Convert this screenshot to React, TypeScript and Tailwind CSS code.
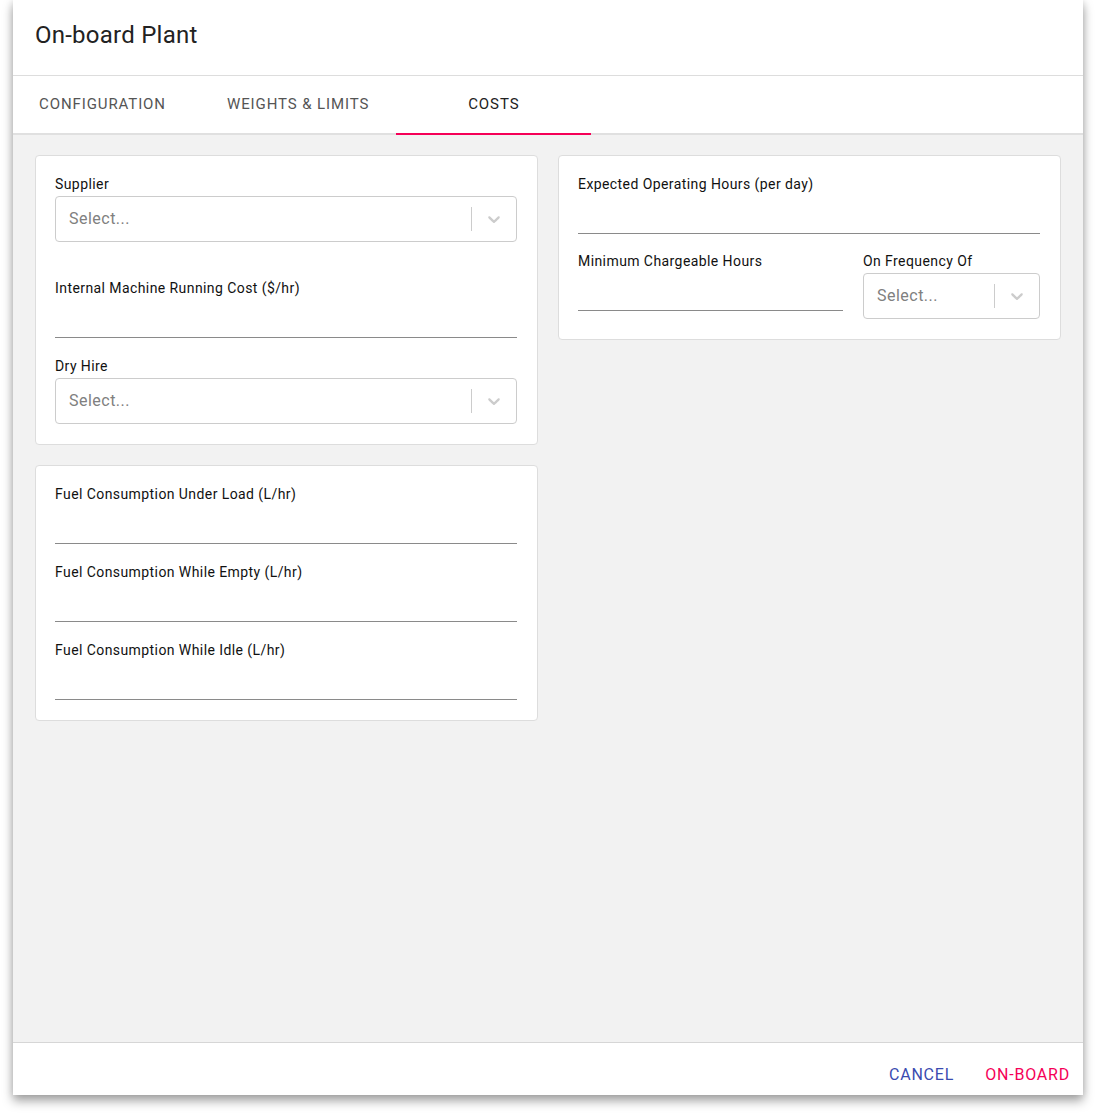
import React from 'react';

const Chevron: React.FC = () => (
  <svg viewBox="0 0 20 20" className="w-5 h-5 fill-[#cccccc]">
    <path d="M4.516 7.548c0.436-0.446 1.043-0.481 1.576 0l3.908 3.747 3.908-3.747c0.533-0.481 1.141-0.446 1.574 0 0.436 0.445 0.408 1.197 0 1.615-0.406 0.418-4.695 4.502-4.695 4.502-0.217 0.223-0.502 0.335-0.787 0.335s-0.57-0.112-0.789-0.335c0 0-4.287-4.084-4.695-4.502s-0.436-1.17 0-1.615z" />
  </svg>
);

const SelectBox: React.FC = () => (
  <div className="mt-[3px] h-[46px] flex items-center border border-[#cccccc] rounded-[4px] bg-white">
    <span className="flex-1 pl-[13px] text-[16px] tracking-[0.03em] text-[#808080]">Select...</span>
    <span className="w-px h-[24px] bg-[#cccccc]" />
    <span className="w-[44px] flex justify-center">
      <Chevron />
    </span>
  </div>
);

const Label: React.FC<{ text: string }> = ({ text }) => (
  <div className="text-[14px] leading-[17px] tracking-[0.03em] text-[#111]">{text}</div>
);

const TextField: React.FC<{ label: string }> = ({ label }) => (
  <div>
    <Label text={label} />
    <div className="h-[41px] border-b border-[#8a8a8a]" />
  </div>
);

const SelectField: React.FC<{ label: string }> = ({ label }) => (
  <div>
    <Label text={label} />
    <SelectBox />
  </div>
);

const Card: React.FC<{ children: React.ReactNode }> = ({ children }) => (
  <div className="bg-white border border-[#dddddd] rounded-[4px] pl-[19px] pr-5 pt-5 pb-5">{children}</div>
);

export default function App() {
  return (
    <div className="bg-white min-h-[1114px] pl-[13px] font-['Roboto',sans-serif]">
      <div className="w-[1070px] h-[1095px] flex flex-col bg-white shadow-[0_6px_10px_rgba(0,0,0,0.35),0_0_8px_rgba(0,0,0,0.12)]">
        {/* header */}
        <div className="h-[76px] border-b border-[#dddddd] flex items-center pl-[22px]">
          <h1 className="text-[24px] tracking-[0.01em] text-[#222] pb-[5px]">On-board Plant</h1>
        </div>

        {/* tabs */}
        <div className="h-[59px] flex items-stretch border-b-2 border-[#e0e0e0] text-[15px] tracking-[0.06em] uppercase">
          <div className="ml-[26px] flex items-center text-[#555]">Configuration</div>
          <div className="ml-[61px] flex items-center text-[#555]">Weights &amp; Limits</div>
          <div className="ml-[27px] w-[195px] flex items-center justify-center text-[#222] relative">
            Costs
            <span className="absolute left-0 right-0 bottom-[-2px] h-[2px] bg-[#f50057]" />
          </div>
        </div>

        {/* content */}
        <div className="flex-1 bg-[#f2f2f2] px-[22px] pt-5">
          <div className="grid grid-cols-2 gap-5 items-start">
            <div className="flex flex-col gap-5">
              <Card>
                <SelectField label="Supplier" />
                <div className="mt-[38px]">
                  <TextField label="Internal Machine Running Cost ($/hr)" />
                </div>
                <div className="mt-[20px]">
                  <SelectField label="Dry Hire" />
                </div>
              </Card>
              <Card>
                <div className="flex flex-col gap-5">
                  <TextField label="Fuel Consumption Under Load (L/hr)" />
                  <TextField label="Fuel Consumption While Empty (L/hr)" />
                  <TextField label="Fuel Consumption While Idle (L/hr)" />
                </div>
              </Card>
            </div>
            <Card>
              <TextField label="Expected Operating Hours (per day)" />
              <div className="mt-[19px] flex gap-[20px]">
                <div className="w-[265px]">
                  <TextField label="Minimum Chargeable Hours" />
                </div>
                <div className="flex-1">
                  <SelectField label="On Frequency Of" />
                </div>
              </div>
            </Card>
          </div>
        </div>

        {/* footer */}
        <div className="h-[53px] border-t border-[#d6d6d6] flex justify-end items-start pt-[22px] pr-[13px] text-[16px] leading-[19px]">
          <button className="uppercase tracking-[0.05em] text-[#3a4bb0]">Cancel</button>
          <button className="ml-[31px] uppercase tracking-[0.05em] text-[#f50057]">On-board</button>
        </div>
      </div>
    </div>
  );
}
